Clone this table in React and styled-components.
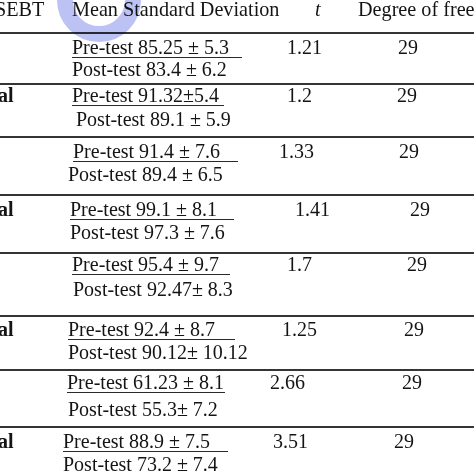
import React from 'react';
import styled, { createGlobalStyle } from 'styled-components';

const GlobalStyle = createGlobalStyle`
  html, body {
    margin: 0;
    padding: 0;
    background: #ffffff;
    overflow: hidden;
  }
  body {
    font-family: 'Liberation Serif', 'Times New Roman', serif;
    color: #141414;
  }
`;

const Page = styled.div`
  position: relative;
  width: 474px;
  height: 474px;
  overflow: hidden;
  background: #fff;
`;

const Watermark = styled.svg`
  position: absolute;
  left: 0;
  top: 0;
  z-index: 2;
  pointer-events: none;
  mix-blend-mode: multiply;
`;

const Table = styled.div`
  position: relative;
  z-index: 1;
  display: flex;
  flex-direction: column;
`;

const HeaderRow = styled.div`
  display: grid;
  grid-template-columns: 60px 205px 85px 124px;
  height: 32px;
  padding-top: 1px;
  box-sizing: border-box;
  font-size: 20.2px;
  line-height: 17px;
  white-space: nowrap;
`;

const HeadCell = styled.div`
  margin-left: ${p => p.$x}px;
  font-style: ${p => (p.$italic ? 'italic' : 'normal')};
`;

const Row = styled.div`
  box-sizing: border-box;
  display: grid;
  grid-template-columns: 60px 205px 85px 124px;
  align-items: start;
  height: ${p => p.$h}px;
  padding-top: ${p => p.$pt}px;
  border-top: 2px solid #353535;
  font-size: 20px;
  white-space: nowrap;
`;

const Label = styled.div`
  margin-left: -2px;
  font-weight: 700;
  line-height: 19px;
`;

const MeanCell = styled.div`
  display: flex;
  flex-direction: column;
  align-items: flex-start;
`;

const PreLine = styled.div`
  margin-left: ${p => p.$x}px;
  width: ${p => p.$w}px;
  line-height: 19px;
  border-bottom: 1px solid #2a2a2a;
`;

const PostLine = styled.div`
  margin-left: ${p => p.$x}px;
  margin-top: ${p => p.$gap}px;
  line-height: 22px;
`;

const Value = styled.div`
  margin-left: ${p => p.$x}px;
  line-height: 19px;
`;

const rows = [
  { label: '', pre: 'Pre-test 85.25 ± 5.3', preX: 72, preEnd: 242, post: 'Post-test 83.4 ± 6.2', postX: 72, t: '1.21', tX: 287, df: '29', dfX: 398, h: 51, pt: 4, gap: 21 },
  { label: 'al', pre: 'Pre-test 91.32±5.4', preX: 72, preEnd: 224, post: 'Post-test 89.1 ± 5.9', postX: 76, t: '1.2', tX: 287, df: '29', dfX: 397, h: 53, pt: 1, gap: 23 },
  { label: '', pre: 'Pre-test 91.4 ± 7.6', preX: 73, preEnd: 238, post: 'Post-test 89.4 ± 6.5', postX: 68, t: '1.33', tX: 279, df: '29', dfX: 399, h: 58, pt: 4, gap: 22 },
  { label: 'al', pre: 'Pre-test 99.1 ± 8.1', preX: 70, preEnd: 234, post: 'Post-test 97.3 ± 7.6', postX: 70, t: '1.41', tX: 295, df: '29', dfX: 410, h: 58, pt: 4, gap: 22 },
  { label: '', pre: 'Pre-test 95.4 ± 9.7', preX: 72, preEnd: 230, post: 'Post-test 92.47± 8.3', postX: 73, t: '1.7', tX: 287, df: '29', dfX: 407, h: 63, pt: 1, gap: 24 },
  { label: 'al', pre: 'Pre-test 92.4 ± 8.7', preX: 68, preEnd: 235, post: 'Post-test 90.12± 10.12', postX: 68, t: '1.25', tX: 282, df: '29', dfX: 404, h: 54, pt: 3, gap: 22 },
  { label: '', pre: 'Pre-test 61.23 ± 8.1', preX: 67, preEnd: 225, post: 'Post-test 55.3± 7.2', postX: 68, t: '2.66', tX: 270, df: '29', dfX: 402, h: 57, pt: 2, gap: 26 },
  { label: 'al', pre: 'Pre-test 88.9 ± 7.5', preX: 63, preEnd: 228, post: 'Post-test 73.2 ± 7.4', postX: 63, t: '3.51', tX: 273, df: '29', dfX: 394, h: 48, pt: 4, gap: 22 },
];

// column starts: label 0, mean 60, t 265, df 350
const App = () => {
  return (
    <Page>
      <GlobalStyle />
      <Table>
        <HeaderRow>
          <HeadCell $x={-5}>SEBT</HeadCell>
          <HeadCell $x={12}>Mean Standard Deviation</HeadCell>
          <HeadCell $x={50} $italic>t</HeadCell>
          <HeadCell $x={8}>Degree of freedom</HeadCell>
        </HeaderRow>
        {rows.map((r, i) => (
          <Row key={i} $h={r.h} $pt={r.pt}>
            <Label>{r.label}</Label>
            <MeanCell>
              <PreLine $x={r.preX - 60} $w={r.preEnd - r.preX}>{r.pre}</PreLine>
              <PostLine $x={r.postX - 60} $gap={r.gap - 21.5}>{r.post}</PostLine>
            </MeanCell>
            <Value $x={r.tX - 265}>{r.t}</Value>
            <Value $x={r.dfX - 350}>{r.df}</Value>
          </Row>
        ))}
      </Table>
      <Watermark width="160" height="60" viewBox="0 0 160 60">
        <path
          d="M 65 0 A 34 34 0 0 0 133 0"
          fill="none"
          stroke="#bcc2f3"
          strokeWidth="16"
        />
      </Watermark>
    </Page>
  );
};

export default App;
